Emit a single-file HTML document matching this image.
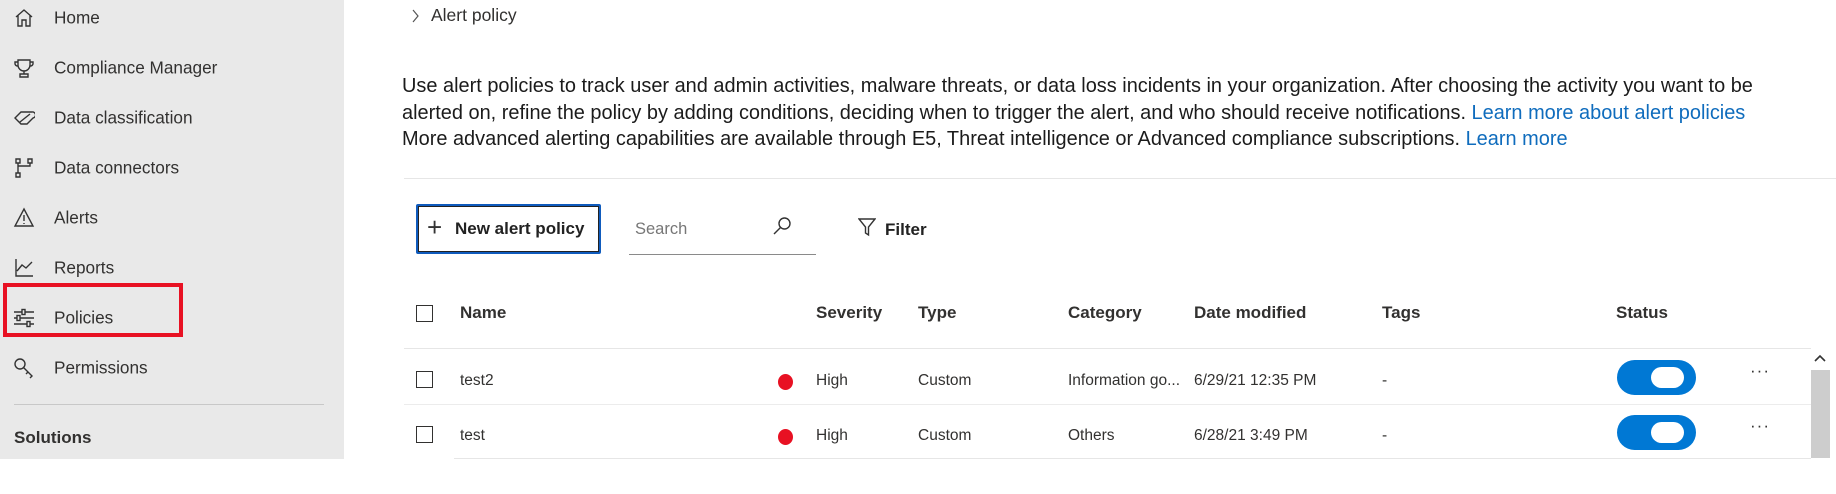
<!DOCTYPE html>
<html><head><style>
*{margin:0;padding:0;box-sizing:border-box}
body{width:1836px;height:494px;background:#fff;font-family:"Liberation Sans",sans-serif;color:#323130;position:relative;overflow:hidden}
.a{position:absolute;white-space:nowrap}
#side{position:absolute;left:0;top:0;width:344px;height:459px;background:#e9e9e9}
.nav{position:absolute;left:54px;font-size:17.2px;color:#323130;transform:translateY(-50%)}
.ic{position:absolute;left:13px;width:22px;height:22px;transform:translateY(-50%)}
.p{left:402px;font-size:19.95px;color:#1b1b1b}
.lk{color:#0f6cbd}
.h{font-size:17px;font-weight:bold;color:#323130;transform:translateY(-50%)}
.c{font-size:15.5px;color:#323130;transform:translateY(-50%)}
.cb{position:absolute;left:416px;width:17px;height:17px;border:1.5px solid #323130}
.tg{position:absolute;left:1617px;width:79px;height:35px;border-radius:18px;background:#0078d4}
.tg:after{content:"";position:absolute;left:34px;top:7px;width:33px;height:21px;border-radius:11px;background:#fff}
.dot{position:absolute;left:778px;width:15px;height:16px;border-radius:50%;background:#e81123}
.dots{font-size:17px;left:1750px;letter-spacing:1px}
</style></head><body>
<div id="side">
<svg class="ic" style="top:18px" viewBox="0 0 22 22" fill="none" stroke="#333" stroke-width="1.4"><path d="M3 10 L11 3 L19 10 M5 8 V19 H9 V13 H13 V19 H17 V8"/></svg>
<div class="nav" style="top:18px">Home</div>
<svg class="ic" style="top:68px" viewBox="0 0 22 22" fill="none" stroke="#333" stroke-width="1.4"><path d="M5 3 H17 V8 A6 6 0 0 1 5 8 Z M5 5 H2 V7 A3 3 0 0 0 5 9 M17 5 H20 V7 A3 3 0 0 1 17 9 M11 14 V17 M7 17 H15 V20 H7 Z"/></svg>
<div class="nav" style="top:68px">Compliance Manager</div>
<svg class="ic" style="top:118px" viewBox="0 0 22 22" fill="none" stroke="#333" stroke-width="1.4"><path d="M2 11 L8 5 H19 A3 3 0 0 1 20 11 L14 17 H8 Z M7 15 L17 7"/></svg>
<div class="nav" style="top:118px">Data classification</div>
<svg class="ic" style="top:168px" viewBox="0 0 22 22" fill="none" stroke="#333" stroke-width="1.4"><path d="M3 2 H7 V6 H3 Z M15 2 H19 V6 H15 Z M3 16 H7 V20 H3 Z M5 6 V16 M17 6 V9 H5"/></svg>
<div class="nav" style="top:168px">Data connectors</div>
<svg class="ic" style="top:218px" viewBox="0 0 22 22" fill="none" stroke="#333" stroke-width="1.4"><path d="M11 2 L20 19 H2 Z M11 8 V14 M11 16 V17"/></svg>
<div class="nav" style="top:218px">Alerts</div>
<svg class="ic" style="top:268px" viewBox="0 0 22 22" fill="none" stroke="#333" stroke-width="1.4"><path d="M3 2 V19 H20 M4 14 L9 8 L13 11 L19 5"/></svg>
<div class="nav" style="top:268px">Reports</div>
<svg class="ic" style="top:318px" viewBox="0 0 22 22" fill="none" stroke="#333" stroke-width="1.4"><path d="M1 5 H21 M1 11 H21 M1 17 H21"/><rect x="9" y="2.5" width="3" height="5" fill="#e9e9e9"/><rect x="4" y="8.5" width="3" height="5" fill="#e9e9e9"/><rect x="14" y="14.5" width="3" height="5" fill="#e9e9e9"/></svg>
<div class="nav" style="top:318px">Policies</div>
<svg class="ic" style="top:368px" viewBox="0 0 22 22" fill="none" stroke="#333" stroke-width="1.4"><circle cx="7" cy="7" r="5"/><path d="M10.5 10.5 L19 19 L17 21 M15 15 L13 17"/></svg>
<div class="nav" style="top:368px">Permissions</div>
<div style="position:absolute;left:14px;top:404px;width:310px;height:1px;background:#c8c8c8"></div>
<div class="nav" style="top:438px;left:14px;font-weight:bold;font-size:17px">Solutions</div>
</div>
<div style="position:absolute;left:3px;top:283px;width:180px;height:54px;border:4px solid #e81123"></div>

<svg class="a" style="left:410px;top:8px" width="10" height="16" viewBox="0 0 10 16" fill="none" stroke="#555" stroke-width="1.2"><path d="M3 2 L8 8 L3 14"/></svg>
<div class="a" style="left:431px;top:5px;font-size:17.5px;color:#323130">Alert policy</div>

<div class="a p" style="top:75px">Use alert policies to track user and admin activities, malware threats, or data loss incidents in your organization. After choosing the activity you want to be</div>
<div class="a p" style="top:102px">alerted on, refine the policy by adding conditions, deciding when to trigger the alert, and who should receive notifications. <span class="lk">Learn more about alert policies</span></div>
<div class="a p" style="top:128px">More advanced alerting capabilities are available through E5, Threat intelligence or Advanced compliance subscriptions. <span class="lk">Learn more</span></div>
<div class="a" style="left:404px;top:178px;width:1432px;height:1px;background:#e6e6e6"></div>

<div class="a" style="left:416px;top:204px;width:185px;height:50px;border:2px solid #0f5bbd;border-radius:2px;box-shadow:inset 0 0 0 1px #222"></div>
<div class="a" style="left:427px;top:216px;font-size:26px;font-weight:300;color:#333;line-height:22px">+</div>
<div class="a" style="left:455px;top:219px;font-size:17px;font-weight:bold;color:#222">New alert policy</div>
<div class="a" style="left:635px;top:220px;font-size:16.5px;color:#777">Search</div>
<svg class="a" style="left:772px;top:216px" width="20" height="20" viewBox="0 0 20 20" fill="none" stroke="#333" stroke-width="1.4"><circle cx="12.5" cy="7.5" r="5.5"/><path d="M8.5 11.5 L2 18"/></svg>
<div class="a" style="left:629px;top:254px;width:187px;height:1px;background:#8a8a8a"></div>
<svg class="a" style="left:858px;top:217px" width="18" height="20" viewBox="0 0 18 20" fill="none" stroke="#333" stroke-width="1.4"><path d="M1 2 H17 L10.5 10 V18 L7.5 16 V10 Z"/></svg>
<div class="a" style="left:885px;top:220px;font-size:17px;font-weight:bold;color:#222">Filter</div>

<div class="cb" style="top:305px"></div>
<div class="a h" style="left:460px;top:313px">Name</div>
<div class="a h" style="left:816px;top:313px">Severity</div>
<div class="a h" style="left:918px;top:313px">Type</div>
<div class="a h" style="left:1068px;top:313px">Category</div>
<div class="a h" style="left:1194px;top:313px">Date modified</div>
<div class="a h" style="left:1382px;top:313px">Tags</div>
<div class="a h" style="left:1616px;top:313px">Status</div>
<div class="a" style="left:404px;top:348px;width:1407px;height:1px;background:#e6e6e6"></div>

<div class="cb" style="top:371px"></div>
<div class="a c" style="left:460px;top:381px">test2</div>
<div class="dot" style="top:374px"></div>
<div class="a c" style="left:816px;top:381px">High</div>
<div class="a c" style="left:918px;top:381px">Custom</div>
<div class="a c" style="left:1068px;top:381px">Information go...</div>
<div class="a c" style="left:1194px;top:381px">6/29/21 12:35 PM</div>
<div class="a c" style="left:1382px;top:381px">-</div>
<div class="tg" style="top:360px"></div>
<div class="a dots" style="top:361px">···</div>
<div class="a" style="left:404px;top:404px;width:1407px;height:1px;background:#ececec"></div>

<div class="cb" style="top:426px"></div>
<div class="a c" style="left:460px;top:436px">test</div>
<div class="dot" style="top:429px"></div>
<div class="a c" style="left:816px;top:436px">High</div>
<div class="a c" style="left:918px;top:436px">Custom</div>
<div class="a c" style="left:1068px;top:436px">Others</div>
<div class="a c" style="left:1194px;top:436px">6/28/21 3:49 PM</div>
<div class="a c" style="left:1382px;top:436px">-</div>
<div class="tg" style="top:415px"></div>
<div class="a dots" style="top:416px">···</div>
<div class="a" style="left:454px;top:458px;width:1357px;height:1px;background:#e6e6e6"></div>

<div class="a" style="left:1811px;top:370px;width:19px;height:88px;background:#cdcdcd"></div>
<svg class="a" style="left:1813px;top:352px" width="14" height="12" viewBox="0 0 14 12" fill="none" stroke="#333" stroke-width="1.6"><path d="M2 9 L7 4 L12 9"/></svg>
</body></html>
